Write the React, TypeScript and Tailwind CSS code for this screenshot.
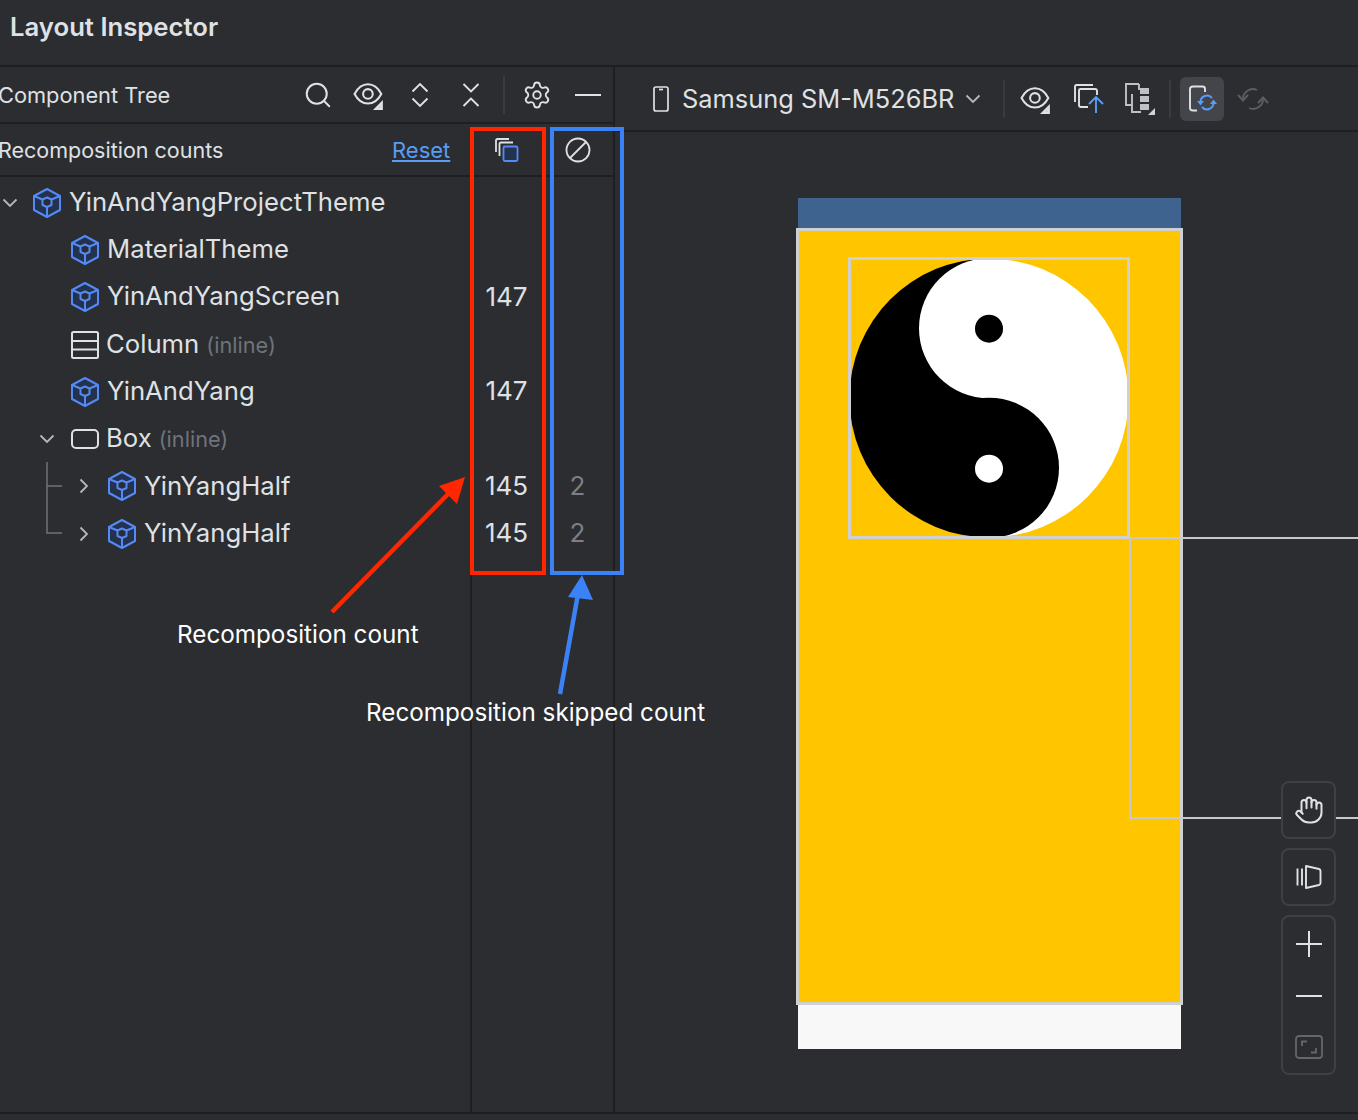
import { Hand, Search, Settings } from 'lucide-react';

const stroke = '#dfe1e5';

const Corner = () => <polygon points="27,27 27,21 21,27" fill="#d0d2d6" />;

const Cube = () => (
  <svg width="30" height="32" viewBox="0 0 30 32" fill="none" stroke="#548af7" strokeWidth="2" strokeLinejoin="round" className="shrink-0">
    <path d="M15 2 L28 9 V23 L15 30 L2 23 V9 Z" fill="#25324d" />
    <path d="M2 9 L10.500 12.500 M28 9 L19.500 12.500 M15 20 V30" />
    <path d="M10.500 12.500 L15 10.500 L19.500 12.500 V18 L15 20 L10.500 18 Z" fill="#2b2d30" />
  </svg>
);

const ColumnIcon = () => (
  <svg width="28" height="28" viewBox="0 0 28 28" fill="none" stroke={stroke} strokeWidth="2" className="shrink-0">
    <rect x="1" y="1" width="26" height="26" rx="1.5" />
    <path d="M1 10 H27 M1 18.500 H27" />
  </svg>
);

const BoxIcon = () => (
  <svg width="28" height="20" viewBox="0 0 28 20" fill="none" stroke={stroke} strokeWidth="2" className="shrink-0">
    <rect x="1" y="1" width="26" height="18" rx="4" />
  </svg>
);

const ChevronDown = () => (
  <svg width="16" height="10" viewBox="0 0 16 10" fill="none" stroke="#b4b8bf" strokeWidth="1.800">
    <path d="M1.500 1.500 L8 8 L14.500 1.500" />
  </svg>
);

const ChevronRight = () => (
  <svg width="10" height="16" viewBox="0 0 10 16" fill="none" stroke="#b4b8bf" strokeWidth="1.800">
    <path d="M1.500 1.500 L8 8 L1.500 14.500" />
  </svg>
);

const Eye = () => (
  <svg width="34" height="30" viewBox="0 0 30 28" fill="none" stroke={stroke} strokeWidth="1.900">
    <path d="M1.500 13 C5 6.500 9.500 4 14 4 C18.500 4 23 6.500 26.500 13 C23 19.500 18.500 22 14 22 C9.500 22 5 19.500 1.500 13 Z" />
    <circle cx="14" cy="13" r="4.500" />
    <Corner />
  </svg>
);

const ExpandIcon = () => (
  <svg width="20" height="26" viewBox="0 0 20 26" fill="none" stroke={stroke} strokeWidth="1.900">
    <path d="M2.500 9.500 L10 2 L17.500 9.500 M2.500 16.500 L10 24 L17.500 16.500" />
  </svg>
);

const CollapseIcon = () => (
  <svg width="20" height="26" viewBox="0 0 20 26" fill="none" stroke={stroke} strokeWidth="1.900">
    <path d="M2.500 2 L10 9.500 L17.500 2 M2.500 24 L10 16.500 L17.500 24" />
  </svg>
);

const Rule = () => (
  <svg width="28" height="4" viewBox="0 0 28 4" stroke={stroke} strokeWidth="2">
    <path d="M1 2 H27" />
  </svg>
);

const StackIcon = () => (
  <svg width="26" height="26" viewBox="0 0 26 26" fill="none" strokeWidth="1.800">
    <path d="M15 2 H3.500 Q2 2 2 3.500 V15" stroke={stroke} />
    <path d="M19 5.500 H7 Q5.500 5.500 5.500 7 V19" stroke={stroke} />
    <rect x="9.500" y="9.500" width="14" height="14.500" rx="1.500" stroke="#548af7" fill="#25324d" />
  </svg>
);

const SkipIcon = () => (
  <svg width="26" height="26" viewBox="0 0 26 26" fill="none" stroke={stroke} strokeWidth="1.800">
    <circle cx="13" cy="13" r="11.500" />
    <path d="M5 21 L21 5" />
  </svg>
);

const PhoneIcon = () => (
  <svg width="16" height="26" viewBox="0 0 16 26" fill="none" stroke={stroke} strokeWidth="1.700">
    <rect x="1" y="1" width="14" height="24" rx="2" />
    <path d="M6 3.500 H10" />
  </svg>
);

const SnapshotIcon = () => (
  <svg width="32" height="34" viewBox="0 0 32 34" fill="none" strokeWidth="1.900">
    <path d="M20 3 H3.500 Q2 3 2 4.500 V20" stroke={stroke} />
    <path d="M15 25 H8 Q6 25 6 23 V8.500 Q6 7 7.500 7 H22 Q24 7 24 9 V13" stroke={stroke} />
    <path d="M23 31 V15 M16 22 L23 15 L30 22" stroke="#589df6" />
  </svg>
);

const TreeViewIcon = () => (
  <svg width="32" height="34" viewBox="0 0 32 34" fill="none" strokeWidth="1.900">
    <path d="M15 2 H2 V23 H8 M15 2 V8" stroke="#bfc1c6" />
    <path d="M8 12 V30 H17" stroke="#bfc1c6" />
    <rect x="16" y="6" width="9" height="6" fill="#bfc1c6" />
    <rect x="16" y="14" width="9" height="6" fill="#bfc1c6" />
    <rect x="16" y="22" width="9" height="6" fill="#bfc1c6" />
    <polygon points="31,33 31,26 24,33" fill="#d0d2d6" />
  </svg>
);

const LiveIcon = () => (
  <svg width="32" height="32" viewBox="0 0 32 32" fill="none" strokeWidth="1.900">
    <path d="M19 9 V6 Q19 3.500 16.500 3.500 H7 Q4 3.500 4 6 V25 Q4 27.500 7 27.500 H11" stroke={stroke} />
    <path d="M14.500 19 A6.500 6.500 0 0 1 26 15 M27.500 20 A6.500 6.500 0 0 1 16 24" stroke="#589df6" strokeWidth="2" />
    <path d="M11 18 H18 L14.500 22.500 Z M24 21 H31 L27.500 16.500 Z" fill="#589df6" />
  </svg>
);

const RefreshOff = () => (
  <svg width="32" height="28" viewBox="0 0 32 28" fill="none" stroke="#5a5d63" strokeWidth="1.900">
    <path d="M6 15 A10 10 0 0 1 20 5 M26 13 A10 10 0 0 1 12 23" />
    <path d="M1 10 L6 15.500 L11 10 M21 18 L26 12.500 L31 18" />
  </svg>
);

const PerspectiveIcon = () => (
  <svg width="26" height="26" viewBox="0 0 26 26" fill="none" stroke={stroke} strokeWidth="1.900">
    <path d="M1.500 4.500 V21.500 M6 4.500 V21.500" />
    <path d="M10 2 L23 5 Q24.500 5.500 24.500 7 V19 Q24.500 20.500 23 21 L10 24 Z" strokeLinejoin="round" />
  </svg>
);

const FitIcon = () => (
  <svg width="28" height="24" viewBox="0 0 28 24" fill="none" stroke="#63666c" strokeWidth="1.800">
    <rect x="1" y="1" width="26" height="22" rx="3" />
    <path d="M7 11 V6.500 H12 M21 13 V17.500 H16" />
  </svg>
);

const YinYang = () => (
  <svg viewBox="0 0 282 282" className="block w-full h-full">
    <path d="M141 1.500 A139.500 139.500 0 0 0 141 280.500 Z" fill="#000" />
    <path d="M141 1.500 A139.500 139.500 0 0 1 141 280.500 Z" fill="#fff" />
    <circle cx="141" cy="71.250" r="70" fill="#fff" />
    <circle cx="141" cy="210.750" r="70" fill="#000" />
    <circle cx="141" cy="71.700" r="14" fill="#000" />
    <circle cx="141" cy="211.700" r="14" fill="#fff" />
  </svg>
);

const rows = [
  { name: 'YinAndYangProjectTheme', pad: 'pl-[32px]', icon: <Cube />, chevron: 'down' },
  { name: 'MaterialTheme', pad: 'pl-[70px]', icon: <Cube /> },
  { name: 'YinAndYangScreen', pad: 'pl-[70px]', icon: <Cube />, count: '147' },
  { name: 'Column', pad: 'pl-[71px]', icon: <ColumnIcon />, note: '(inline)' },
  { name: 'YinAndYang', pad: 'pl-[70px]', icon: <Cube />, count: '147' },
  { name: 'Box', pad: 'pl-[71px]', icon: <BoxIcon />, note: '(inline)', chevron: 'down' },
  { name: 'YinYangHalf', pad: 'pl-[107px]', icon: <Cube />, count: '145', skipped: '2', chevron: 'right' },
  { name: 'YinYangHalf', pad: 'pl-[107px]', icon: <Cube />, count: '145', skipped: '2', chevron: 'right' },
];

const TreeRow = ({ row }: { row: (typeof rows)[number] }) => (
  <div className="flex items-center h-[47.300px]">
    <div className={`relative flex items-center gap-[7px] w-[471px] ${row.pad}`}>
      {row.chevron === 'down' && (
        <span className={`absolute top-1/2 -translate-y-1/2 ${row.name === 'Box' ? 'left-[39px]' : 'left-[2px]'}`}>
          <ChevronDown />
        </span>
      )}
      {row.chevron === 'right' && (
        <span className="absolute top-1/2 -translate-y-1/2 left-[79px]">
          <ChevronRight />
        </span>
      )}
      {row.icon}
      <span className="pb-[2px] text-[25.700px] text-[#dfe1e5] leading-none whitespace-nowrap">
        {row.name}
        {row.note && <span className="ml-[7px] text-[21.700px] text-[#6f737a]">{row.note}</span>}
      </span>
    </div>
    <div className="w-[71px] pb-[2px] text-center text-[26px] text-[#dfe1e5]">{row.count}</div>
    <div className="w-[71px] pb-[2px] text-center text-[26px] text-[#7c7f85]">{row.skipped}</div>
  </div>
);

export default function App() {
  return (
    <div className="relative w-[1358px] h-[1120px] overflow-hidden flex flex-col bg-[#2b2d30] font-['Inter',sans-serif]">
      {/* Title */}
      <div className="h-[67px] shrink-0 flex items-center pl-[10px] pb-[10px] border-b-2 border-[#1e1f22]">
        <span className="text-[25.700px] font-semibold text-[#dfe1e5]">Layout Inspector</span>
      </div>

      <div className="flex h-[1047px] border-b-2 border-[#1e1f22]">
        {/* Left panel */}
        <div className="relative w-[615px] shrink-0 border-r-2 border-[#1e1f22] flex flex-col">
          <div className="absolute left-[470px] top-[109px] bottom-0 w-[2px] bg-[#1e1f22]" />
          <div className="h-[57px] shrink-0 flex items-center border-b-2 border-[#1e1f22]">
            <span className="-ml-[2px] w-[294px] pt-[2px] text-[21.800px] text-[#dfe1e5] whitespace-nowrap">Component Tree</span>
            <div className="w-[51px] flex justify-center"><Search size={30} color={stroke} strokeWidth={1.600} /></div>
            <div className="w-[51px] flex justify-center"><Eye /></div>
            <div className="w-[51px] flex justify-center"><ExpandIcon /></div>
            <div className="w-[51px] flex justify-center"><CollapseIcon /></div>
            <div className="w-[15px] flex justify-center"><div className="w-[2px] h-[38px] bg-[#393b40]" /></div>
            <div className="w-[51px] flex justify-center"><Settings size={30} color={stroke} strokeWidth={1.500} /></div>
            <div className="w-[51px] flex justify-center"><Rule /></div>
          </div>
          <div className="h-[53px] shrink-0 flex items-center border-b-2 border-[#1e1f22]">
            <span className="-ml-[2px] w-[394px] pt-[2px] text-[21.500px] text-[#dfe1e5] whitespace-nowrap">Recomposition counts</span>
            <span className="w-[79px] pt-[2px] text-[22px] text-[#589df6] underline underline-offset-2">Reset</span>
            <div className="w-[71px] flex justify-center"><StackIcon /></div>
            <div className="w-[71px] flex justify-center"><SkipIcon /></div>
          </div>
          <div className="pt-[2px]">
            {rows.map((row, i) => (
              <TreeRow key={i} row={row} />
            ))}
          </div>
        </div>

        {/* Right panel */}
        <div className="flex-1 min-w-0 flex flex-col">
          <div className="h-[65px] shrink-0 flex items-center border-b-2 border-[#1e1f22]">
            <div className="w-[29px] ml-[38px] flex"><PhoneIcon /></div>
            <span className="pt-[2px] text-[25.400px] text-[#dfe1e5] whitespace-nowrap">Samsung SM-M526BR</span>
            <div className="ml-[11px] w-[38px]"><ChevronDown /></div>
            <div className="w-[2px] h-[38px] bg-[#393b40]" />
            <div className="w-[62px] flex justify-center"><Eye /></div>
            <div className="w-[44px] flex justify-center"><SnapshotIcon /></div>
            <div className="w-[58px] flex justify-center"><TreeViewIcon /></div>
            <div className="w-[2px] h-[38px] bg-[#393b40]" />
            <div className="ml-[9px] w-[44px] h-[44px] rounded-[6px] bg-[#43454a] flex items-center justify-center"><LiveIcon /></div>
            <div className="ml-[7px] w-[44px] flex justify-center"><RefreshOff /></div>
          </div>

          {/* Device preview */}
          <div className="flex-1 pt-[66px] pl-[183px]">
            <div className="w-[383px]">
              <div className="h-[30px] bg-[#3d638e]" />
              <div className="-mx-[2px] h-[777px] bg-[#ffc600] border-[3px] border-[#d0d0d0] pt-[26px] pl-[49px]">
                <div className="relative w-[282px] h-[282px]">
                  <YinYang />
                  <div className="absolute inset-0 border-[3px] border-[#d0d0d0]" />
                </div>
              </div>
              <div className="h-[44px] bg-[#f8f8f8]" />
            </div>
          </div>
        </div>
      </div>

      {/* Connector lines of the selected view */}
      <svg className="absolute inset-0 pointer-events-none" width="1358" height="1120" fill="none" stroke="#c8c8c8" strokeWidth="2">
        <path d="M1130 538 H1358 M1130 538 V818 H1282 M1336 818 H1358" />
      </svg>

      {/* Tree guide lines */}
      <svg className="absolute inset-0 pointer-events-none" width="1358" height="1120" fill="none" stroke="#6f737a" strokeWidth="1.500">
        <path d="M47 462 V533 H62 M47 486 H62" />
      </svg>

      {/* Floating canvas tools */}
      <div className="absolute left-[1281px] top-[781px] w-[55px] flex flex-col gap-[9px]">
        <div className="h-[58px] rounded-[8px] border-2 border-[#3e4045] bg-[#2b2d30] flex items-center justify-center">
          <Hand size={30} color={stroke} strokeWidth={1.600} />
        </div>
        <div className="h-[58px] rounded-[8px] border-2 border-[#3e4045] bg-[#2b2d30] flex items-center justify-center">
          <PerspectiveIcon />
        </div>
        <div className="h-[160px] rounded-[8px] border-2 border-[#3e4045] bg-[#2b2d30] flex flex-col items-center justify-between pt-[14px] pb-[14px]">
          <svg width="26" height="26" viewBox="0 0 26 26" stroke={stroke} strokeWidth="2"><path d="M0 13 H26 M13 0 V26" /></svg>
          <svg width="26" height="4" viewBox="0 0 26 4" stroke={stroke} strokeWidth="2"><path d="M0 2 H26" /></svg>
          <FitIcon />
        </div>
      </div>

      {/* Annotations */}
      <div className="absolute left-[470px] top-[127px] w-[76px] h-[448px] border-[4px] border-[#ff2600]" />
      <div className="absolute left-[550px] top-[127px] w-[74px] h-[448px] border-[4px] border-[#3b82f6]" />
      <svg className="absolute inset-0 pointer-events-none" width="1358" height="1120">
        <path d="M332 612 L449 493" stroke="#ff2600" strokeWidth="4.500" fill="none" />
        <polygon points="465,477 457,504 439,486" fill="#ff2600" />
        <path d="M560 694 L578 594" stroke="#3b82f6" strokeWidth="4.500" fill="none" />
        <polygon points="582,575 593,600 568,597" fill="#3b82f6" />
      </svg>
      <span className="absolute left-[177px] top-[620px] text-[24.250px] leading-[30px] text-white whitespace-nowrap">Recomposition count</span>
      <span className="absolute left-[366px] top-[698px] text-[24.250px] leading-[30px] text-white whitespace-nowrap">Recomposition skipped count</span>
    </div>
  );
}
